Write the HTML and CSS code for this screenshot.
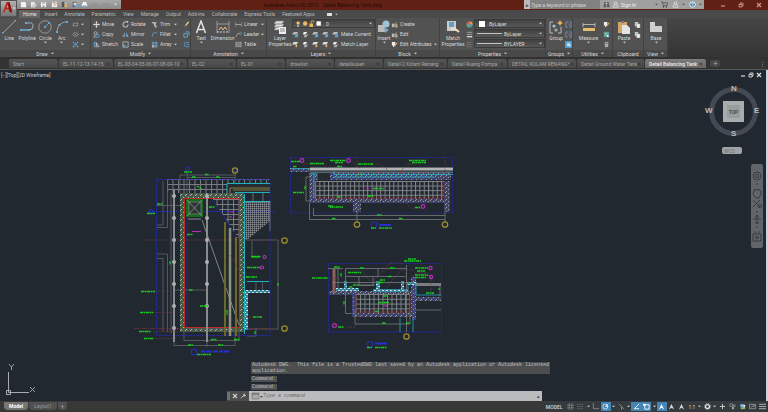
FILE: index.html
```html
<!DOCTYPE html>
<html lang="en">
<head>
<meta charset="utf-8">
<title>Autodesk AutoCAD 2019 - Detail Balancing Tank.dwg</title>
<link rel="stylesheet" href="styles.css">
</head>
<body>
<svg class="defs" aria-hidden="true">
  <symbol id="doc" viewBox="0 0 8 8"><path d="M1 1h5l1 2v4H1z" fill="#f2f2f2"/></symbol>
  <symbol id="open" viewBox="0 0 8 8"><path d="M1 1h4l1 2v4H1z" fill="#e8e8e8"/><path d="M1 7l2-3h5L6 7z" fill="#d0d0c8"/></symbol>
  <symbol id="save" viewBox="0 0 8 8"><path d="M1 1h6v6H1z" fill="#eee"/><path d="M2 1h4v2H2z" fill="#b5b5b5"/><path d="M3 5h2v2H3z" fill="#999"/></symbol>
  <symbol id="saveas" viewBox="0 0 8 8"><path d="M1 1h6v6H1z" fill="#eee"/><path d="M2 1h3v2H2z" fill="#aaa"/><path d="M3 6l4-4" stroke="#d9a94e" stroke-width="1.2"/></symbol>
  <symbol id="webopen" viewBox="0 0 8 8"><path d="M1 1h3v6H1z" fill="#555"/><path d="M4 4h3v3H4z" fill="#e0b35c"/><path d="M4 2h2v1H4z" fill="#eee"/></symbol>
  <symbol id="websave" viewBox="0 0 8 8"><path d="M2 1h4v6H2z" fill="#555"/><path d="M3 2h3v3H3z" fill="#eee"/><path d="M4 4h3v3H4z" fill="#62a9dc"/></symbol>
  <symbol id="print" viewBox="0 0 8 8"><path d="M2 1h4v2H2zM1 3h6v3H1z" fill="#f5f5f5"/><path d="M2 5h4v2H2z" fill="#6fb0d8"/></symbol>
  <symbol id="undo" viewBox="0 0 8 8"><path d="M7 5Q5 3 2 4M3 2L1 4l2 2" fill="none" stroke="#888"/></symbol>
  <symbol id="redo" viewBox="0 0 8 8"><path d="M1 5q2-2 5-1M5 2l2 2-2 2" fill="none" stroke="#888"/></symbol>
  <symbol id="caret" viewBox="0 0 4 4"><path d="M0 1h4L2 3z" fill="currentColor"/></symbol>
  <symbol id="line" viewBox="0 0 14 14"><path d="M1 13L13 1" stroke="#bbb" stroke-width=".7"/><path d="M0 12h1.500v1.500H0zM12.500 0H14v1.500h-1.500z" fill="#5fa9d6"/></symbol>
  <symbol id="poly" viewBox="0 0 14 14"><path d="M1 10h8q4 0 4-4T9 3H6" fill="none" stroke="#aaa"/><path d="M1 10h8" stroke="#5fa9d6"/><path d="M0 9h2v2H0zM8 9h2v2H8zM5 2h2v2H5z" fill="#5fa9d6"/></symbol>
  <symbol id="circle" viewBox="0 0 14 14"><circle cx="7" cy="7" r="6.200" fill="none" stroke="#aaa" stroke-width=".8"/><path d="M7 7l4-4" stroke="#5fa9d6"/><path d="M6 6h2v2H6zM10 2h2v2h-2z" fill="#5fa9d6"/></symbol>
  <symbol id="arc" viewBox="0 0 14 14"><path d="M2 12Q2 3 12 1.500" fill="none" stroke="#aaa" stroke-width=".8"/><path d="M1 11h2v2H1zM3.500 4h2v2h-2zM11 1h2v2h-2z" fill="#5fa9d6"/></symbol>
  <symbol id="rect" viewBox="0 0 8 8"><path d="M1.500 2.500h5v3h-5z" fill="none" stroke="#aaa" stroke-width=".7"/><path d="M1 5h1v1H1zM6 2h1v1H6z" fill="#6cb8e6"/></symbol>
  <symbol id="ellipse" viewBox="0 0 8 8"><ellipse cx="4" cy="4" rx="3" ry="2" fill="none" stroke="#aaa" stroke-width=".7"/><path d="M3.500 3.500h1v1h-1zM6.500 3.500h1v1h-1z" fill="#6cb8e6"/></symbol>
  <symbol id="hatch" viewBox="0 0 8 8"><path d="M1 1h1v1H1zM6 1h1v1H6zM1 6h1v1H1zM6 6h1v1H6z" fill="#ddd"/><path d="M2 2h4v4H2z" fill="#4d87ab"/></symbol>
  <symbol id="move" viewBox="0 0 8 8"><path d="M4 0l1.500 2h-1v1.500H6v-1L8 4 6 5.500v-1H4.500V6h1L4 8 2.500 6h1V4.500H2v1L0 4l2-1.500v1h1.500V2h-1z" fill="#ddd"/></symbol>
  <symbol id="copy" viewBox="0 0 8 8"><circle cx="3" cy="2.500" r="1.700" fill="none" stroke="#ccc" stroke-width=".8"/><circle cx="5" cy="5.500" r="1.900" fill="none" stroke="#62a9dc"/><path d="M1 5v2h2" fill="none" stroke="#ccc" stroke-width=".7"/></symbol>
  <symbol id="stretch" viewBox="0 0 8 8"><path d="M1.500 1.500h2v5h-2z" fill="none" stroke="#62a9dc"/><path d="M4 2l3 4.500H4z" fill="none" stroke="#ccc" stroke-width=".8"/></symbol>
  <symbol id="rotate" viewBox="0 0 8 8"><path d="M5 1.200A3 3 0 1 0 7 4" fill="none" stroke="#ddd"/><path d="M4.500 0H7v2.500z" fill="#ddd"/></symbol>
  <symbol id="mirror" viewBox="0 0 8 8"><path d="M3.300 1v5.500H.5z" fill="#999"/><path d="M4.700 1v5.500h2.800z" fill="#62a9dc"/></symbol>
  <symbol id="scale" viewBox="0 0 8 8"><path d="M1 1h6v6H1z" fill="none" stroke="#ccc" stroke-width=".8"/><path d="M1.500 4.500h2v2h-2z" fill="none" stroke="#62a9dc"/></symbol>
  <symbol id="trim" viewBox="0 0 8 8"><path d="M1 2h3M3 1l2 5M6 1L4 5" stroke="#ddd"/><circle cx="5.500" cy="6.300" r="1" fill="none" stroke="#ddd" stroke-width=".7"/></symbol>
  <symbol id="fillet" viewBox="0 0 8 8"><path d="M1.500 7V5q0-3 3-3H7" fill="none" stroke="#5c9cc8"/></symbol>
  <symbol id="array" viewBox="0 0 8 8"><path d="M1.500 1.500h2v2h-2zM5 1.500h2v2H5zM5 5h2v2H5z" fill="none" stroke="#62a9dc"/><path d="M1.500 5h2v2h-2z" fill="none" stroke="#ccc"/></symbol>
  <symbol id="erase" viewBox="0 0 8 8"><path d="M6.500 1L3 5" stroke="#f0d8a0" stroke-width="1.700"/><path d="M3.500 4L1 7l3-1.500z" fill="#e0813a"/></symbol>
  <symbol id="box" viewBox="0 0 8 8"><path d="M1 3h4v4H1zM3 1h4v4" fill="none" stroke="#62a9dc"/></symbol>
  <symbol id="offset" viewBox="0 0 8 8"><path d="M7 1.500H3Q1.500 1.500 1.500 4T3 6.500h4M7 4H4" fill="none" stroke="#5c9cc8"/></symbol>
  <symbol id="text" viewBox="0 0 14 14"><path d="M2.500 13L7 1l4.500 12M4 9.500h6" fill="none" stroke="#e2e2e2" stroke-width="1.500"/></symbol>
  <symbol id="dim" viewBox="0 0 14 14"><path d="M1 1v12M13 1v12M1 4h12" stroke="#aaa" fill="none" stroke-width=".8"/><path d="M3 10l2-3 2 3 2-3 2 3" stroke="#e7bd76" fill="none"/><path d="M1 12h12" stroke="#ccc" stroke-dasharray="2 1"/></symbol>
  <symbol id="linear" viewBox="0 0 8 8"><path d="M.5 1.500v5M7.500 1.500v5" stroke="#5fa9d6" stroke-width=".9"/><path d="M1 4h6" stroke="#ccc" stroke-width=".7"/></symbol>
  <symbol id="leader" viewBox="0 0 8 8"><path d="M1 7l2-4h2" fill="none" stroke="#bbb" stroke-width=".8"/><circle cx="6.300" cy="2.800" r="1.200" fill="none" stroke="#62a9dc" stroke-width=".8"/></symbol>
  <symbol id="table" viewBox="0 0 8 8"><path d="M.5 1h7v6h-7z" fill="#9a9a9a"/><path d="M.5 3h7M.5 5h7M3 1v6M5 1v6" stroke="#666" stroke-width=".5"/></symbol>
  <symbol id="layers" viewBox="0 0 14 14"><path d="M3 1h8l-2 3H1zM3 4h8l-2 3H1zM3 7h8l-2 3H1z" fill="#ddd" stroke="#777" stroke-width=".5"/><path d="M6 7h7v7H6z" fill="#eee"/><path d="M7 9h5M7 11h5" stroke="#888"/></symbol>
  <symbol id="layB" viewBox="0 0 8 8"><path d="M2 1h5L5 4H0z" fill="#bbb"/><path d="M4 3h3v4H3z" fill="#5f9fca"/></symbol>
  <symbol id="layW" viewBox="0 0 8 8"><path d="M2 1h4L4 4H1z" fill="#eee"/><path d="M3 4h4L5 7H2z" fill="#acacac"/></symbol>
  <symbol id="layY" viewBox="0 0 8 8"><path d="M2 1h5L5 4H0z" fill="#ddd"/><path d="M4 4h2v3H4z" fill="#e4b45c"/></symbol>
  <symbol id="insert" viewBox="0 0 14 14"><circle cx="9" cy="4" r="3.500" fill="#9cc2d9"/><path d="M1 5h7v7H1z" fill="#bbb"/><path d="M7 7l5 3-4 3z" fill="#7aa9c6"/></symbol>
  <symbol id="create" viewBox="0 0 8 8"><path d="M1 3h3v4H1z" fill="#bbb"/><path d="M4 4l3-3M5 4h2v3H5z" stroke="#e0b978" fill="#999" stroke-width=".7"/></symbol>
  <symbol id="tagi" viewBox="0 0 8 8"><path d="M1 1h4v3L3 7 1 4z" fill="#eee"/><path d="M4 6l3-4" stroke="#e3af5c" stroke-width="1.300"/></symbol>
  <symbol id="match" viewBox="0 0 14 14"><path d="M1 1h9v10H1z" fill="#ccc"/><path d="M3 2h5v5H3z" fill="#5fa0d0"/><path d="M5 10l3-2 5 4" stroke="#f1e3c0" stroke-width="2" fill="none"/></symbol>
  <symbol id="wheel" viewBox="0 0 8 8"><circle cx="4" cy="4" r="3.500" fill="#58b26a"/><path d="M4 4V.5A3.500 3.500 0 0 1 7.500 4z" fill="#f09a3c"/><path d="M4 4h3.500A3.500 3.500 0 0 1 4 7.500z" fill="#4a8ad8"/><path d="M4 4H.5A3.500 3.500 0 0 1 4 .5z" fill="#d84d6a"/></symbol>
  <symbol id="lines" viewBox="0 0 8 8"><path d="M1 1.500h6M1 4h6" stroke="#aaa"/><path d="M1 6.500h6" stroke="#ddd" stroke-width="1.500"/></symbol>
  <symbol id="dots" viewBox="0 0 8 8"><path d="M1 1.500h6M1 4h6M1 6.500h6" stroke="#999" stroke-dasharray="1 1"/></symbol>
  <symbol id="group" viewBox="0 0 14 14"><path d="M4 2H1v11h3M9 13h3V7" fill="none" stroke="#bbb"/><circle cx="5" cy="6" r="1.600" fill="#9ac6e2"/><circle cx="7" cy="10" r="1.600" fill="#aaa"/><path d="M11 0l1 2 2 1-2 1-1 2-1-2-2-1 2-1z" fill="#f0b75c"/></symbol>
  <symbol id="ungroup" viewBox="0 0 8 8"><path d="M3 1H1v6h2M5 1h2v6H5" fill="none" stroke="#5f9fca"/><path d="M3 2l3 4" stroke="#d35d4c"/></symbol>
  <symbol id="gsel" viewBox="0 0 8 8"><path d="M0 0h8v8H0z" fill="#4f9bcd"/><path d="M2 2h4v4H2z" fill="#a9d7f0"/><path d="M4 3l3 3H5z" fill="#fff"/></symbol>
  <symbol id="measure" viewBox="0 0 14 14"><path d="M1 3v4M13 3v4M1 4.500h12" stroke="#ccc" stroke-width=".8"/><path d="M1 8h12v3H1z" fill="#e6bd6f"/></symbol>
  <symbol id="calc" viewBox="0 0 8 8"><path d="M2 1h4v6H2z" fill="#aaa"/><path d="M3 2h2v1H3z" fill="#555"/></symbol>
  <symbol id="pick" viewBox="0 0 8 8"><path d="M1 1h6v6H1z" fill="#5b9fa7"/><path d="M2 2h3v3H2z" fill="#6cc08a"/><path d="M4 4l3 2-2 1z" fill="#fff"/></symbol>
  <symbol id="paste" viewBox="0 0 14 14"><path d="M1 2h9v11H1z" fill="#d3a668"/><path d="M4 1h3v2H4z" fill="#777"/><path d="M5 5h5l3 3v6H5z" fill="#e4e4e4"/></symbol>
  <symbol id="pages" viewBox="0 0 8 8"><path d="M1 1h3l1 1v4H1z" fill="#ccc"/><path d="M3 3h3l1 1v4H3z" fill="#eee" stroke="#777" stroke-width=".4"/></symbol>
  <symbol id="base" viewBox="0 0 14 14"><path d="M1 2h5v4h7v6H1z" fill="#cfcfcf"/></symbol>
  <symbol id="x" viewBox="0 0 6 6"><path d="M1 1l4 4M5 1L1 5" stroke="currentColor" stroke-width="1.200"/></symbol>
  <symbol id="min" viewBox="0 0 6 6"><path d="M1 4h4" stroke="currentColor" stroke-width="1.200"/></symbol>
  <symbol id="restore" viewBox="0 0 6 6"><path d="M2 2V1h3v3H4M1 2.500h3V5H1z" fill="none" stroke="currentColor" stroke-width=".9"/></symbol>
  <symbol id="wrench" viewBox="0 0 8 8"><path d="M1 7l3.500-3.500" stroke="#ccc" stroke-width="1.200"/><path d="M4 3l1-2 2-.5L6 2l1 1 1-1-.5 2L5 5z" fill="#ccc"/></symbol>
  <symbol id="person" viewBox="0 0 8 8"><circle cx="4" cy="2.300" r="1.500" fill="none" stroke="#e8e8e8" stroke-width=".8"/><path d="M1 7q0-3 3-3t3 3z" fill="none" stroke="#e8e8e8" stroke-width=".8"/></symbol>
  <symbol id="binoc" viewBox="0 0 8 8"><path d="M1.500 1h2v6h-3zM4.500 1h2l1 6h-3z" fill="#5c5c5c"/><path d="M2 3h4" stroke="#ddd" stroke-width=".6"/></symbol>
  <symbol id="cart" viewBox="0 0 8 8"><path d="M0 1h1.500l1 4H7l.7-3H2" fill="none" stroke="#555" stroke-width=".9"/><circle cx="3" cy="6.700" r=".7"/><circle cx="6" cy="6.700" r=".7"/></symbol>
  <symbol id="help" viewBox="0 0 8 8"><circle cx="4" cy="4" r="3.500" fill="#eef4f8"/><circle cx="4" cy="4" r="2.700" fill="#4f88b3"/><path d="M3 3q0-1 1-1t1 1-1 1v.8M4 5.500v.7" fill="none" stroke="#fff" stroke-width=".8"/></symbol>
  <symbol id="sgrid" viewBox="0 0 8 8"><path d="M0 2.500h8M0 5.500h8M2.500 0v8M5.500 0v8" stroke="#8d8d8d" stroke-width=".8"/></symbol>
  <symbol id="sdots" viewBox="0 0 8 8"><path d="M0 1.500h8M0 4h8M0 6.500h8" stroke="#858585" stroke-width=".9" stroke-dasharray="1 1"/></symbol>
  <symbol id="ortho" viewBox="0 0 8 8"><path d="M1.500 0v6.500H8" fill="none" stroke="#888"/></symbol>
  <symbol id="polar" viewBox="0 0 8 8"><circle cx="3.800" cy="4.200" r="2.800" fill="none" stroke="#fff" stroke-width=".8"/><path d="M4 4l3-3M4 4h3" stroke="#fff" stroke-width=".8"/></symbol>
  <symbol id="iso" viewBox="0 0 8 8"><path d="M1 1l6 6M4 4v4" stroke="#8a9a84" stroke-width=".9"/></symbol>
  <symbol id="track" viewBox="0 0 8 8"><path d="M7 1L1.500 6.500H7" fill="none" stroke="#fff"/></symbol>
  <symbol id="osnap" viewBox="0 0 8 8"><path d="M2 2h5v5H2z" fill="none" stroke="#fff"/><path d="M0 1h3v2H0z" fill="#fff"/></symbol>
  <symbol id="anno" viewBox="0 0 8 8"><path d="M1 7.500L4 1l3 6.500L4 5.500z" fill="currentColor"/></symbol>
  <symbol id="gear" viewBox="0 0 8 8"><circle cx="4" cy="4" r="2.200" fill="none" stroke="#ddd" stroke-width="1.500"/><circle cx="4" cy="4" r="3.300" fill="none" stroke="#ddd" stroke-width="1" stroke-dasharray="1.300 1.300"/></symbol>
  <symbol id="plus" viewBox="0 0 8 8"><path d="M4 1v6M1 4h6" stroke="currentColor"/></symbol>
  <symbol id="isolate" viewBox="0 0 8 8"><path d="M1 1h3v3H1zM5 2h2v2H5z" fill="none" stroke="#999" stroke-width=".8"/><circle cx="4.500" cy="6" r="1.300" fill="#aaa"/></symbol>
  <symbol id="hw" viewBox="0 0 8 8"><circle cx="3.500" cy="3" r="2.200" fill="#6db4df"/><path d="M2 5h5v2H2z" fill="#8bb86a"/><path d="M5 2h2v3H5z" fill="#e8e8e8"/></symbol>
  <symbol id="clean" viewBox="0 0 8 8"><path d="M.5 1.500h7v5h-7z" fill="none" stroke="#aaa" stroke-width=".8"/><path d="M2 5l4-2M4 2.500h2v2" stroke="#aaa" stroke-width=".7" fill="none"/></symbol>
  <symbol id="burger" viewBox="0 0 8 8"><path d="M0 1.500h8M0 4h8M0 6.500h8" stroke="#bbb"/></symbol>
</svg>

<div class="app">
  <header class="top">
    <button class="appbtn" aria-label="Application menu"><svg class="logo" viewBox="0 0 16 16"><path d="M2 12L6 1h3l3 11H9L8 9H5l-1 3z" fill="#b92a20"/><path d="M6 7h2L7 4z" fill="#d8a5a0"/><path d="M9 1l3 11h-2L7 3z" fill="#7e1812"/><path d="M12.500 7h3L14 9z" fill="#ddd"/></svg></button>
    <div class="topmain">
      <div class="titlebar">
        <div class="qat">
          <button aria-label="New"><svg><use href="#doc"/></svg></button><button aria-label="Open"><svg><use href="#open"/></svg></button><button aria-label="Save"><svg><use href="#save"/></svg></button><button aria-label="Save as"><svg><use href="#saveas"/></svg></button><button aria-label="Open from web"><svg><use href="#webopen"/></svg></button><button aria-label="Save to web"><svg><use href="#websave"/></svg></button><button aria-label="Plot"><svg><use href="#print"/></svg></button><button aria-label="Undo"><svg><use href="#undo"/></svg></button><button aria-label="Redo"><svg><use href="#redo"/></svg></button><button aria-label="Customize"><svg class="car"><use href="#caret"/></svg></button>
        </div>
        <div class="title"><span>Autodesk AutoCAD 2019</span><span>Detail Balancing Tank.dwg</span></div>
        <div class="info">
          <button class="go" aria-label="Expand search">▸</button>
          <input class="search" aria-label="Search" placeholder="Type a keyword or phrase">
          <button aria-label="Find"><svg><use href="#binoc"/></svg></button>
          <button class="sign"><svg><use href="#person"/></svg><span>Sign In</span><svg class="car"><use href="#caret"/></svg></button>
          <button aria-label="App store"><svg><use href="#cart"/></svg></button>
          <button class="wide" aria-label="Stay connected"><svg><use href="#person"/></svg><svg class="car"><use href="#caret"/></svg></button>
          <button class="wide" aria-label="Help"><svg><use href="#help"/></svg><svg class="car"><use href="#caret"/></svg></button>
        </div>
        <div class="winbtns"><button aria-label="Minimize"><svg><use href="#min"/></svg></button><button aria-label="Restore"><svg><use href="#restore"/></svg></button><button aria-label="Close"><svg><use href="#x"/></svg></button></div>
      </div>
      <nav class="menu">
        <a class="on" href="#">Home</a><a href="#">Insert</a><a href="#">Annotate</a><a href="#">Parametric</a><a href="#">View</a><a href="#">Manage</a><a href="#">Output</a><a href="#">Add-ins</a><a href="#">Collaborate</a><a href="#">Express Tools</a><a href="#">Featured Apps</a><a class="cam" href="#" aria-label="Minimize ribbon"><i></i><svg class="car"><use href="#caret"/></svg></a>
      </nav>
    </div>
  </header>

  <section class="ribbon">
    <div class="panel p-draw"><div class="body">
      <button class="big"><svg><use href="#line"/></svg>Line</button>
      <button class="big"><svg><use href="#poly"/></svg>Polyline</button>
      <button class="big"><svg><use href="#circle"/></svg>Circle<svg class="car"><use href="#caret"/></svg></button>
      <button class="big"><svg><use href="#arc"/></svg>Arc<svg class="car"><use href="#caret"/></svg></button>
      <div class="col"><button aria-label="Rectangle"><svg><use href="#rect"/></svg><svg class="car"><use href="#caret"/></svg></button><button aria-label="Ellipse"><svg><use href="#ellipse"/></svg><svg class="car"><use href="#caret"/></svg></button><button aria-label="Hatch"><svg><use href="#hatch"/></svg><svg class="car"><use href="#caret"/></svg></button></div>
    </div><h2>Draw<svg class="car"><use href="#caret"/></svg></h2></div>
    <div class="panel p-modify"><div class="body">
      <div class="col"><button><svg><use href="#move"/></svg>Move</button><button><svg><use href="#copy"/></svg>Copy</button><button><svg><use href="#stretch"/></svg>Stretch</button></div>
      <div class="col"><button><svg><use href="#rotate"/></svg>Rotate</button><button><svg><use href="#mirror"/></svg>Mirror</button><button><svg><use href="#scale"/></svg>Scale</button></div>
      <div class="col spread"><button><svg><use href="#trim"/></svg>Trim<svg class="car"><use href="#caret"/></svg></button><button><svg><use href="#fillet"/></svg>Fillet<svg class="car"><use href="#caret"/></svg></button><button><svg><use href="#array"/></svg>Array<svg class="car"><use href="#caret"/></svg></button></div>
      <div class="col"><button aria-label="Erase"><svg><use href="#erase"/></svg></button><button aria-label="Explode"><svg><use href="#box"/></svg></button><button aria-label="Offset"><svg><use href="#offset"/></svg></button></div>
    </div><h2>Modify<svg class="car"><use href="#caret"/></svg></h2></div>
    <div class="panel p-anno"><div class="body">
      <button class="big"><svg><use href="#text"/></svg>Text<svg class="car"><use href="#caret"/></svg></button>
      <button class="big"><svg><use href="#dim"/></svg>Dimension</button>
      <div class="col spread"><button><svg><use href="#linear"/></svg>Linear<svg class="car"><use href="#caret"/></svg></button><button><svg><use href="#leader"/></svg>Leader<svg class="car"><use href="#caret"/></svg></button><button><svg><use href="#table"/></svg>Table</button></div>
    </div><h2>Annotation<svg class="car"><use href="#caret"/></svg></h2></div>
    <div class="panel p-layers"><div class="body">
      <button class="big"><svg><use href="#layers"/></svg>Layer<br>Properties</button>
      <div class="col">
        <label class="combo lay"><svg class="bulbs" viewBox="0 0 32 8"><circle cx="3" cy="3.500" r="2" fill="#f0c060"/><path d="M2 6h2v2H2z" fill="#bbb"/><circle cx="11" cy="4" r="2.500" fill="#edb95c"/><path d="M16 4h4v4h-4z" fill="#e7b45a"/><path d="M18 4V1h3v2" fill="none" stroke="#d9a550"/><path d="M24 1.500h5v5h-5z" fill="#fff"/></svg><select aria-label="Layer"><option>0</option></select><svg class="car"><use href="#caret"/></svg></label>
        <div class="row"><button aria-label="Off"><svg><use href="#layB"/></svg></button><button aria-label="Isolate"><svg><use href="#layW"/></svg></button><button aria-label="Freeze"><svg><use href="#layB"/></svg></button><button aria-label="Lock"><svg><use href="#layB"/></svg></button><button><svg><use href="#layB"/></svg>Make Current</button></div>
        <div class="row"><button aria-label="On"><svg><use href="#layY"/></svg></button><button aria-label="Unisolate"><svg><use href="#layW"/></svg></button><button aria-label="Thaw"><svg><use href="#layY"/></svg></button><button aria-label="Unlock"><svg><use href="#layY"/></svg></button><button><svg><use href="#layW"/></svg>Match Layer</button></div>
      </div>
    </div><h2>Layers<svg class="car"><use href="#caret"/></svg></h2></div>
    <div class="panel p-block"><div class="body">
      <button class="big"><svg><use href="#insert"/></svg>Insert<svg class="car"><use href="#caret"/></svg></button>
      <div class="col spread"><button><svg><use href="#create"/></svg>Create</button><button><svg><use href="#create"/></svg>Edit</button><button><svg><use href="#tagi"/></svg>Edit Attributes<svg class="car"><use href="#caret"/></svg></button></div>
    </div><h2>Block<svg class="car"><use href="#caret"/></svg></h2></div>
    <div class="panel p-props"><div class="body">
      <button class="big"><svg><use href="#match"/></svg>Match<br>Properties</button>
      <div class="col"><button aria-label="Color"><svg><use href="#wheel"/></svg></button><button aria-label="Lineweight"><svg><use href="#lines"/></svg></button><button aria-label="Linetype"><svg><use href="#dots"/></svg></button></div>
      <div class="col grow">
        <label class="combo"><i class="sw"></i><select aria-label="Object color"><option>ByLayer</option></select><svg class="car"><use href="#caret"/></svg></label>
        <label class="combo"><i class="ln"></i><select aria-label="Object lineweight"><option>ByLayer</option></select><svg class="car"><use href="#caret"/></svg></label>
        <label class="combo"><i class="ln"></i><select aria-label="Object linetype"><option>BYLAYER</option></select><svg class="car"><use href="#caret"/></svg></label>
      </div>
    </div><h2>Properties<svg class="car"><use href="#caret"/></svg></h2></div>
    <div class="panel p-group"><div class="body">
      <button class="big"><svg><use href="#group"/></svg>Group</button>
      <div class="col"><button aria-label="Ungroup"><svg><use href="#ungroup"/></svg></button><button aria-label="Group edit"><svg><use href="#ungroup"/></svg></button><button aria-label="Group selection"><svg><use href="#gsel"/></svg></button></div>
    </div><h2>Groups<svg class="car"><use href="#caret"/></svg></h2></div>
    <div class="panel p-util"><div class="body">
      <button class="big"><svg><use href="#measure"/></svg>Measure<svg class="car"><use href="#caret"/></svg></button>
      <div class="col"><button aria-label="Quick select"><svg><use href="#tagi"/></svg></button><button aria-label="Select all"><svg><use href="#pick"/></svg></button><button aria-label="Calculator"><svg><use href="#calc"/></svg></button></div>
    </div><h2>Utilities<svg class="car"><use href="#caret"/></svg></h2></div>
    <div class="panel p-clip"><div class="body">
      <button class="big"><svg><use href="#paste"/></svg>Paste<svg class="car"><use href="#caret"/></svg></button>
      <div class="col"><button aria-label="Cut"><svg><use href="#pages"/></svg></button><button aria-label="Copy clip"><svg><use href="#pages"/></svg></button></div>
    </div><h2>Clipboard</h2></div>
    <div class="panel p-view"><div class="body">
      <button class="big"><svg><use href="#base"/></svg>Base<svg class="car"><use href="#caret"/></svg></button>
    </div><h2>View<svg class="car"><use href="#caret"/></svg></h2></div>
  </section>

  <nav class="files">
    <a href="#">Start</a><a href="#">EL-11-12-13-14-15<svg><use href="#x"/></svg></a><a href="#">EL-03-04-05-06-07-08-09-10<svg><use href="#x"/></svg></a><a href="#">EL-02<svg><use href="#x"/></svg></a><a href="#">EL-01<svg><use href="#x"/></svg></a><a href="#">drawlist<svg><use href="#x"/></svg></a><a href="#">detailkusen<svg><use href="#x"/></svg></a><a href="#">Detail-2 Kolam Renang<svg><use href="#x"/></svg></a><a href="#">Detail Ruang Pompa<svg><use href="#x"/></svg></a><a href="#">DETAIL KOLAM RENANG*<svg><use href="#x"/></svg></a><a href="#">Detail Ground Water Tank<svg><use href="#x"/></svg></a><a class="on" href="#">Detail Balancing Tank<svg><use href="#x"/></svg></a><button class="add" aria-label="New drawing"><svg><use href="#plus"/></svg></button><button class="more" aria-label="More drawings">⋮</button>
  </nav>

  <main class="canvas">
    <svg class="drawing" viewBox="0 70 768 331" preserveAspectRatio="xMinYMin meet" role="img" aria-label="Balancing tank drawing">
      <defs>
        <pattern id="g6" width="5.500" height="5" x="167" y="179" patternUnits="userSpaceOnUse"><path d="M0 .5H6M.5 0V5" stroke="#797d80" stroke-width="1" fill="none"/></pattern>
        <pattern id="g4" width="4.350" height="4.600" x="315" y="181" patternUnits="userSpaceOnUse"><path d="M0 .5H5M.5 0V5" stroke="#84878a" stroke-width="1" fill="none"/></pattern>
        <pattern id="g3" width="4.500" height="4.800" x="355.500" y="294" patternUnits="userSpaceOnUse"><path d="M0 .5H5M.5 0V5" stroke="#808386" stroke-width="1" fill="none"/></pattern>
        <pattern id="g2" width="2" height="2" patternUnits="userSpaceOnUse"><path d="M0 0H2M0 0V2" stroke="#a2a5a8" stroke-width="1" fill="none"/></pattern>
        <pattern id="wall" width="5" height="5" patternUnits="userSpaceOnUse"><path d="M0 0h5v5H0z" fill="#4c5450"/><path d="M0 0h1v1H0zM3 2h1v1H3zM1 4h1v1H1z" fill="#b4b4b4"/><path d="M2 1h1v1H2zM4 4h1v1H4zM0 2h1v1H0z" fill="#2a8230"/></pattern>
        <pattern id="conc" width="5" height="4" patternUnits="userSpaceOnUse"><path d="M0 0h5v4H0z" fill="#404660"/><path d="M0 0h1v1H0zM3 1h1v1H3zM1 3h1v1H1z" fill="#9a9a9a"/><path d="M2 2h1v1H2zM4 3h1v1H4z" fill="#3a3ab0"/></pattern>
        <pattern id="ice" width="4" height="4" patternUnits="userSpaceOnUse"><path d="M0 0h4v4H0z" fill="#32869c"/><path d="M0 0h2v1H0zM2 2h2v1H2z" fill="#ccdce2"/></pattern>
      </defs>

      <!-- plan -->
      <g fill="none">
        <path d="M167 179h103v14H167z" fill="url(#g6)"/>
        <g stroke="#62666b" stroke-width=".8"><path d="M163 181v44h-6M167.500 179v48.500H157M157 254h10.500v78M157 258.500h6V331M171 193v140M157 205.500h23"/><path d="M180 193v-18h55M187 193v-15.500h48M235 173v20M187 170v7M247 241l2-1h28.500M278 240v88.500M174 290h33M252 241v16"/><path d="M174 345.500h61M184 340.500h55M174 332v14M184 332v9M239 332v9M235 332v14M207 330v17M245 329h34M247 336h9v-8M256 281v10M262.500 281v10"/></g>
        <g stroke="#242abc" stroke-width=".8" stroke-dasharray="3 1"><path d="M156.500 179.500H270v156H156.500zM148 211.500h128M187 198v138M212 200l26 38"/></g>
        <path d="M145 240h135M134 328.500h140" stroke="#6a353d" stroke-width=".7" stroke-dasharray="5 1 1 1"/>
        <path d="M180 193h64v139h-64z M185 198v130h54V198z" fill="url(#wall)" fill-rule="evenodd"/>
        <path d="M212 198h27v41z" fill="url(#g6)"/>
        <path d="M184.500 198.500h55v129h-55z" stroke="#bf2a27" stroke-width="1.200"/>
        <path d="M186 199h17v18h-17z" fill="#17691e"/><path d="M189 202h12v12h-12z" fill="#2b3433" stroke="#8c9490" stroke-width=".6"/><path d="M187 200l15 16M202 200l-15 16" stroke="#a7aaa7" stroke-width=".7"/><path d="M188 219h13" stroke="#888"/>
        <path d="M202 220l37 105" stroke="#858585"/>
        <path d="M225 222v114M236 237v99" stroke="#6d6927" stroke-width="2"/><path d="M230 228v108" stroke="#929482" stroke-width="2.500"/>
        <path d="M174 190v152M207 193v149" stroke="#898b8d" stroke-width="2"/>
        <g fill="#aeb0b2"><circle cx="174" cy="196" r="2"/><circle cx="174" cy="218" r="2"/><circle cx="174" cy="240" r="2"/><circle cx="174" cy="262" r="2"/><circle cx="174" cy="284" r="2"/><circle cx="174" cy="306" r="2"/><circle cx="174" cy="328" r="2"/><circle cx="207" cy="196" r="2"/><circle cx="207" cy="218" r="2"/><circle cx="207" cy="240" r="2"/><circle cx="207" cy="262" r="2"/><circle cx="207" cy="284" r="2"/><circle cx="207" cy="306" r="2"/></g>
        <path d="M227 183h43v10h-43z" fill="#252d33"/>
        <path d="M230 193v-5h40M233 190h37" stroke="#8b7a3c"/>
        <path d="M227 193v-9.500h43M235 192.500h35M244.500 201.500H270M244.500 194v140M247 281.500h22" stroke="#20b2c0"/>
        <path d="M253 193v8M263 193v8M270 201v30" stroke="#888" stroke-width=".7"/>
        <path d="M245 202h25v19l-23 19h-2z" fill="url(#g2)"/>
        <path d="M245 290h25v3h-22v37h-3z" fill="url(#ice)"/>
        <g stroke="#9b8c2f" stroke-width="1.300"><circle cx="235" cy="170.500" r="2.600" fill="#273072"/><circle cx="284.500" cy="240.500" r="2.700"/><circle cx="284.500" cy="328.500" r="2.700"/></g>
        <g stroke="#2530cf"><circle cx="187.500" cy="169" r="2"/><circle cx="151" cy="211.500" r="2"/><circle cx="194" cy="352" r="3"/><path d="M201 351.500h28" stroke-width="2" stroke-dasharray="4 1 6 1 5 1"/></g>
        <g stroke="#643640" stroke-width=".7" stroke-dasharray="2 1"><path d="M155 291h15M153 312.500h20M153 331.500h25M153 338.500h20M230 255l14 24M240 317h13"/></g>
        <g stroke="#18c91e" stroke-width="1.300" stroke-dasharray="3 .5 2 .5"><path d="M205 174.500h4M192 177h4M216 177h4M157 204h6M197 186l5 3M141 291.500h14M140 312.500h13M139 331.500h12M144 338.500h9M251 256.500h10M247 267.500h13M246 277h11M253 317h9M252 257h7M187 234.500h6M188 345h5M218 345h5M211 339.500h6M234 339.500h6M189 290h4M200 306h8M170 261v4M227 310v5M197 354.500h14M278 283v3M255 331v3M184 172h8M209 207h6M147 213.500h8"/></g>
        <g stroke="#b82fb8" stroke-width="1.200"><path d="M192 231.500h9M230 212h4M229 217h3"/><circle cx="264.500" cy="257" r="1.500"/><circle cx="262" cy="267.500" r="1.500"/></g>
      </g>

      <!-- long section -->
      <g fill="none">
        <path d="M290.500 157.500h162v55.500h-162z" stroke="#242aa8" stroke-width=".8" stroke-dasharray="3 1"/>
        <path d="M315 181h129v18.500H315z" fill="url(#g4)"/>
        <path d="M290 168h20v4h-20zM309 173h142v7H315v19h129v-18h6v31h-6v-9h-83v9h-8v-9h-44z" fill="url(#conc)"/>
        <path d="M318 173h12v8h-12z" fill="#242c32"/>
        <path d="M310 167.500h143v3H310z" fill="#a4a6a8"/><path d="M310 169h143" stroke="#d0d0d0" stroke-width=".7"/>
        <path d="M310 171.500h143v1.500H310z" fill="#596a74"/>
        <path d="M334 174.500h119M334 171v4M309 174h8M291 168.500h19M334 177h100M314 174v24" stroke="#2b9cb8" stroke-width="1"/>
        <path d="M315 181v17h128v-17" stroke="#9c393b" stroke-width=".8"/>
        <path d="M355 172.500h3M399 172.500h3M423 172.500h3M378 172.500h2" stroke="#cf3434"/>
        <g stroke="#777b7e" stroke-width=".8"><path d="M313 215.500h132M309.500 219.500H445M309.500 203v17M313.500 208v8M357 212v10M445 212v10M306 177v24M306 177h4M306 201h4"/></g>
        <g stroke="#643640" stroke-width=".7" stroke-dasharray="2 1"><path d="M303 164h20l5 4M345 162h7l8 6M372 164h8l8 6M400 172l7-8h10M407 203l3 5h12M445 157v55M357 157v10"/></g>
        <g stroke="#9b8c2f" stroke-width="1.300"><circle cx="357" cy="224.500" r="2.700"/><circle cx="445" cy="224.500" r="2.700"/></g>
        <g stroke="#2530cf"><circle cx="374" cy="225" r="3"/><path d="M379 225h12" stroke-width="2"/></g>
        <g stroke="#18c91e" stroke-width="1.300" stroke-dasharray="3 .5 2 .5"><path d="M291 161.500h10M293 166.500h4M310 163.500h14M330 160.500h16M335 162.500h8M337 166.500h5M358 164h15M409 160.500h17M412 162.500h14M293 192.500h11M373 188.500h11M337 197h4M368 196h6M328 206h5M330 207h13M377 215h5M332 218.500h4M399 218.500h4M415 207.500h5M305 186v4M360 174h2M371 228h5M379 228h13"/></g>
        <g stroke="#b82fb8" stroke-width="1.200"><circle cx="302" cy="160.500" r="1.800"/><circle cx="348.500" cy="160.500" r="1.800"/><circle cx="423" cy="206.500" r="1.800"/><path d="M366 188.500h3"/></g>
      </g>

      <!-- cross section -->
      <g fill="none">
        <path d="M328.500 263.500h113v68.500h-113z" stroke="#242aa8" stroke-width=".8" stroke-dasharray="3 1"/>
        <path d="M355.500 294H410v19h-54.500z" fill="url(#g3)"/>
        <path d="M329 291h30v3h-4v19h56v-36h5v20h25v4h-25v19h-4v-3h-60v-22h-23zM359 291h52v3h-52z" fill="url(#conc)"/>
        <path d="M334 269v24" stroke="#8e6060" stroke-width="3"/>
        <path d="M336 288h23v3h-23zM373 289h35v3h-35zM344 281h3v8h-3zM376 281h4v8h-4zM401 281h3v8h-3zM407 282h10v3h-10z" fill="url(#ice)"/>
        <path d="M415 283h26v3h-26z" fill="#7b7d7f"/>
        <path d="M416 285v10h25M400 318v14M413 318v14M408 284v8" stroke="#258f9f"/>
        <path d="M356 294v18h54v-18" stroke="#9c393b" stroke-width=".8"/>
        <g stroke="#777b7e" stroke-width=".8"><path d="M328 268.500h15M345.500 268.500v45h6M345.500 268.500h61M378 268.500v8M406.500 265v67M345.500 276.500h60M359 276.500v9h14v-9M338 268v20M332 282.500h80M355 310v14h55v-12M416 310h25M440 285v11M357 285h18"/></g>
        <g stroke="#703942" stroke-width=".7" stroke-dasharray="2 1"><path d="M329 278.500h10M360 273h4l6 8M374 281l16-18h12M387 287l14-17h14M402 286l14-13h12M425 276h6v18M347 327h8l6-12"/></g>
        <g stroke="#9b8c2f" stroke-width="1.300"><circle cx="406.500" cy="336.500" r="2.700"/></g>
        <g stroke="#2530cf"><circle cx="370" cy="344.500" r="3"/><path d="M375 343.500h12" stroke-width="2"/></g>
        <g stroke="#18c91e" stroke-width="1.300" stroke-dasharray="3 .5 2 .5"><path d="M312 278h16M348 272.500h13M360 268h4M390 268h5M380 280h5M378 282.500h5M388 276.500h4M404 261h17M408 259h8M415 268h13M417 271h8M415 275h13M415 277.500h11M378 302.500h11M375 311.500h4M383 296h4M334 267h6M341 273v4M344 301v4M426 293h8M338 327h6M382 323h4M406 323h4M367 347.500h5M375 347.500h12M439 288v2M353 285h6M349 287h4"/></g>
        <g stroke="#b82fb8" stroke-width="1.200"><circle cx="334.500" cy="325.500" r="1.900"/><circle cx="430.500" cy="268" r="1.600"/><circle cx="431" cy="277" r="1.600"/><path d="M384 306h3"/></g>
      </g>
    </svg>

    <div class="vlabel">[−][Top][2D Wireframe]</div>
    <div class="vwin"><button aria-label="Minimize drawing"><svg><use href="#min"/></svg></button><button aria-label="Restore drawing"><svg><use href="#restore"/></svg></button><button aria-label="Close drawing"><svg><use href="#x"/></svg></button></div>
    <div class="cube"><div class="ring"></div><button class="face">TOP</button><b class="n">N</b><b class="e">E</b><b class="s">S</b><b class="w">W</b></div>
    <button class="wcs">WCS</button>
    <div class="navbar">
      <svg viewBox="0 0 12 84"><g fill="none" stroke="#34383d" stroke-width=".9"><circle cx="6" cy="12" r="4"/><circle cx="6" cy="12" r="1.700"/><path d="M5 20h2M3 32q-2-4 0-4v-2q1-1 2 0 1-2 2 0 2-1 2 1 2 0 1 3l-2 4H5zM2 36l7 7M9 36l-7 7"/><circle cx="9" cy="42" r="1.700"/><path d="M5 48h2M6 51v8M2 55h8M4 53l2-2 2 2M4 58l2 2 2-2M5 63h2M2 70h8v7H2zM3 68h2M7 68h2M5 72l3 1.500L5 75z"/></g></svg>
    </div>
    <svg class="ucs" viewBox="0 0 34 38"><g fill="none" stroke="#a9abad"><path d="M3.500 9v20.500H24"/><path d="M1.500 27.500h4v4h-4z"/><path d="M4 1l2.500 3L9 1M6.500 4v3M25 24l5 5M30 24l-5 5" stroke-width=".9"/></g></svg>
    <div class="edge"></div>

    <div class="cmd">
      <div class="hist"><p>Autodesk DWG.&nbsp; This file is a TrustedDWG last saved by an Autodesk application or Autodesk licensed<br>application.</p><p>Command:</p><p>Command:</p></div>
      <div class="cmdbar"><div class="grip"><i></i><button aria-label="Close command line"><svg><use href="#x"/></svg></button><button aria-label="Customize command line"><svg><use href="#wrench"/></svg></button></div>
        <label class="entry"><svg viewBox="0 0 12 8"><path d="M1 1h7v6H1z" fill="#aaa" stroke="#777" stroke-width=".7"/><path d="M1 2h7" stroke="#666"/><path d="M9 4h3l-1.500 2z" fill="#555"/></svg><input aria-label="Command" placeholder="Type a command"><span>▴</span></label></div>
    </div>
  </main>

  <footer class="status">
    <nav class="layouts"><a class="on" href="#">Model</a><a href="#">Layout1</a><a class="plus" href="#" aria-label="New layout"><svg><use href="#plus"/></svg></a></nav>
    <div class="tools">
      <button class="model">MODEL</button><button aria-label="Grid"><svg><use href="#sgrid"/></svg></button><button aria-label="Snap"><svg><use href="#sdots"/></svg></button><button class="c" aria-label="Snap options"><svg class="car"><use href="#caret"/></svg></button><button aria-label="Ortho"><svg><use href="#ortho"/></svg></button><button class="hot" aria-label="Polar"><svg><use href="#polar"/></svg></button><button class="c" aria-label="Polar options"><svg class="car"><use href="#caret"/></svg></button><button aria-label="Isodraft"><svg><use href="#iso"/></svg></button><button class="c" aria-label="Isodraft options"><svg class="car"><use href="#caret"/></svg></button><button class="hot" aria-label="Tracking"><svg><use href="#track"/></svg></button><button class="hot" aria-label="Object snap"><svg><use href="#osnap"/></svg></button><button class="c" aria-label="Snap list"><svg class="car"><use href="#caret"/></svg></button><button class="hot" aria-label="Annotation visibility"><svg><use href="#anno"/></svg></button><button aria-label="Autoscale"><svg><use href="#anno"/></svg></button><button aria-label="Annotation scale"><svg><use href="#anno"/></svg></button><button>1:1</button><button class="c" aria-label="Scale list"><svg class="car"><use href="#caret"/></svg></button><button aria-label="Workspace"><svg><use href="#gear"/></svg></button><button class="c" aria-label="Workspace list"><svg class="car"><use href="#caret"/></svg></button><button aria-label="Monitor"><svg><use href="#plus"/></svg></button><button aria-label="Isolate objects"><svg><use href="#isolate"/></svg></button><button aria-label="Graphics"><svg><use href="#hw"/></svg></button><button aria-label="Clean screen"><svg><use href="#clean"/></svg></button><button aria-label="Customization"><svg><use href="#burger"/></svg></button>
    </div>
  </footer>
</div>
</body>
</html>
```

FILE: styles.css
```css
* { box-sizing: border-box; }
body { margin: 0; background: #212830; color: #c4c4c4; font: 5px/6px Roboto, "Noto Sans", sans-serif; }
.defs { position: absolute; width: 0; height: 0; }
button, input, select { margin: 0; padding: 0; border: 0; background: none; color: inherit; font: inherit; border-radius: 0; }
button { display: flex; align-items: center; justify-content: center; }
a { color: inherit; text-decoration: none; }
svg { display: block; flex: none; width: 7px; height: 7px; }
svg.car { width: 3px; height: 3px; }
.app { display: flex; flex-direction: column; height: 100vh; overflow: hidden; }

/* title bar and menu */
.top { display: flex; background: #4a4a4a; }
.appbtn { width: 17px; height: 17px; background: linear-gradient(#b5b0b0, #777); border: 1px solid #555; }
.logo { width: 15px; height: 15px; }
.topmain { flex: 1; min-width: 0; }
.titlebar { display: flex; height: 10px; background: #602114; }
.qat { display: flex; align-items: center; width: 104px; height: 9px; padding-left: 1px; background: linear-gradient(#a8a8a8, #8b8b8b); color: #eee; }
.qat button { flex: 1; }
.title { flex: 1; display: flex; justify-content: center; align-items: center; gap: 5px; color: #260a06; white-space: nowrap; }
.info { display: flex; align-items: center; width: 180px; height: 9px; background: #a0a0a0; color: #f2f2f2; }
.info button { width: 12px; }
.info .go { width: 6px; height: 9px; background: #bbb; color: #333; }
.info .search { flex: 1; min-width: 0; height: 9px; padding-left: 1px; background: #818181; font-style: italic; }
.search::placeholder { color: #d8d8d8; opacity: 1; }
.info .sign { width: 46px; gap: 2px; justify-content: flex-start; }
.sign .car { margin-left: auto; }
.info .wide { width: 17px; gap: 3px; }
.info .wide .car, .sign .car { color: #555; }
.winbtns { display: flex; align-items: center; width: 64px; padding-left: 10px; color: #c9968d; }
.winbtns button { flex: 1; }
.winbtns svg, .vwin svg { width: 6px; height: 6px; }
.menu { display: flex; height: 8px; align-items: center; white-space: nowrap; color: #bcbcbc; }
.menu a { height: 8px; padding: 0 3px; line-height: 8px; }
.menu a + a { margin-left: 1px; }
.menu .on { margin-left: 2px; padding: 0 4px; background: #646464; color: #e5e5e5; }
.menu .cam { display: flex; align-items: center; gap: 3px; margin-left: 7px; }
.cam i { width: 5px; height: 3px; background: #ddd; }

/* ribbon */
.ribbon { display: flex; height: 40px; background: linear-gradient(#464646, #353535); border-bottom: 1px solid #2f2f2f; color: #d8d8d8; }
.panel { display: flex; flex-direction: column; background: #525252; border-right: 1px solid #414141; white-space: nowrap; }
.body { display: flex; flex: 1; padding: 1px 0 1px 1px; }
.panel h2 { display: flex; align-items: center; justify-content: center; gap: 3px; flex: none; height: 7px; margin: 0; background: #494949; font: inherit; }
.big { flex-direction: column; justify-content: flex-start; flex: 1 1 0; padding-top: 1px; line-height: 6px; }
.big > svg { width: 14px; height: 14px; margin-bottom: 1px; }
.big > svg.car { width: 3px; height: 3px; margin: 0; }
.col { display: flex; flex-direction: column; flex: none; }
.col > *, .row { height: 10px; flex: 0 1 10px; }
.col button { justify-content: flex-start; gap: 2px; }
.spread .car { margin-left: auto; }
.row { display: flex; gap: 3px; }
.p-draw { width: 91px; }
.p-draw .col { width: 18px; margin-left: 2px; }
.p-draw .big:nth-child(2) { flex-grow: 1.2; }
.p-modify { width: 100px; }
.p-modify .body { padding-left: 2px; gap: 3px; }
.p-modify .col { width: 26px; }
.p-modify .col:nth-child(4) { width: 7px; margin-left: 3px; }
.p-anno { width: 76px; }
.p-anno .big { flex-grow: 3; }
.p-anno .big:nth-child(2) { flex-grow: 4; }
.p-anno .col { width: 29px; margin-right: 2px; }
.p-layers { width: 109px; }
.p-layers .col { width: 83px; }
.p-block { width: 64px; }
.p-block .col { width: 46px; margin-right: 2px; }
.p-props { width: 106px; }
.p-props .big { flex: 0 0 24px; }
.p-props .col { margin-left: 1px; }
.p-props .grow { flex: 1; }
.p-group { width: 27px; }
.p-util { width: 40px; }
.p-util .col, .p-clip .col { margin-right: 2px; }
.p-clip { width: 31px; }
.p-view { width: 24px; }
.col > .combo { display: flex; align-items: center; flex: 0 0 9px; height: 9px; padding: 0 2px; margin-bottom: 1px; background: linear-gradient(#414141, #585858); border: 1px solid #3a3a3a; }
.p-props .combo:last-child { margin-bottom: 0; }
.combo select { flex: 1; min-width: 0; appearance: none; height: 6px; line-height: 6px; padding-left: 2px; }
.bulbs { width: 29px; height: 7px; }
.sw { width: 6px; height: 6px; margin: 0 2px; background: #fff; }
.ln { width: 25px; height: 1px; background: #c4c4c4; }

/* drawing tabs */
.files { display: grid; grid-template-columns: 50px 55px 74px 49px 49px 49px 49px 64px 60px 69px 68px 62px 16px 1fr; height: 12px; padding: 1px 0 1px 9px; background: #333; border-bottom: 1px solid #555; color: #a8a8a8; white-space: nowrap; }
.files a { display: flex; align-items: center; justify-content: space-between; padding: 0 3px 0 4px; background: linear-gradient(#555, #464646); border-right: 1px solid #333; border-radius: 2px 3px 0 0; }
.files a svg { width: 4px; height: 4px; color: #353535; }
.files .on { background: linear-gradient(#7c7c7c, #666); color: #f0f0f0; font-weight: 500; }
.add { margin: 1px 3px; background: #484848; border-radius: 3px; }
.add svg { width: 5px; height: 5px; }
.more { justify-self: end; width: 12px; }

/* drawing area */
.canvas { position: relative; flex: 1; min-height: 0; background: #212830; overflow: hidden; }
.drawing { width: 100%; height: 100%; }
.vlabel { position: absolute; left: 1px; top: 2px; color: #ccc; }
.vwin { position: absolute; right: 6px; top: 2px; display: flex; gap: 2px; color: #ddd; }
.cube { position: absolute; right: 11px; top: 15px; width: 50px; height: 54px; }
.ring { position: absolute; left: 2px; top: 2px; width: 49px; height: 49px; border: 5px solid #444a53; border-radius: 50%; }
.face { position: absolute; left: 16px; top: 16px; width: 21px; height: 21px; background: #9a9d9d; border: 4px solid #a9acac; color: #4d5050; font-weight: 700; }
.cube b { position: absolute; font: 700 8px/8px "Liberation Sans", sans-serif; color: #b9babb; }
.cube .n { left: 24px; top: 0; }
.cube .e { left: 47px; top: 22px; }
.cube .s { left: 24px; top: 45px; }
.cube .w { left: -2px; top: 22px; }
.wcs { position: absolute; right: 26px; top: 77px; width: 20px; height: 7px; justify-content: flex-start; padding-left: 2px; background: #a0a3a6; border-radius: 2px; color: #6a6d70; }
.navbar { position: absolute; right: 5px; top: 94px; width: 12px; height: 84px; background: #60646b; border-radius: 2px; }
.navbar svg { width: 12px; height: 84px; }
.ucs { position: absolute; left: 5px; bottom: 0; width: 34px; height: 38px; }
.edge { position: absolute; right: 0; top: 0; bottom: 0; width: 2px; background: #c5d2df; }

/* command line */
.cmd { position: absolute; left: 227px; right: 226px; bottom: 0; }
.hist { display: flex; flex-direction: column; align-items: flex-start; gap: 2px; padding: 0 0 1px 24px; font-family: "Liberation Mono", monospace; white-space: nowrap; color: #c0c0c0; }
.hist p { margin: 0; padding: 0 1px; background: #4c4e50; }
.cmdbar { display: flex; height: 10px; }
.grip { display: flex; align-items: center; gap: 2px; width: 22px; background: #4c4c4c; color: #ccc; }
.grip i { width: 3px; height: 8px; background: #707070; }
.grip svg { width: 6px; height: 6px; }
.entry { display: flex; flex: 1; align-items: center; padding: 0 2px; background: #babbbc; color: #444; }
.entry svg { width: 12px; height: 8px; }
.entry input { flex: 1; min-width: 0; font: italic 5px/8px "Liberation Mono", monospace; }
.entry input::placeholder { color: #6a6a6a; opacity: 1; }

/* status bar */
.status { display: flex; justify-content: space-between; height: 11px; padding-left: 4px; background: #383838; }
.layouts { display: flex; height: 8px; margin-top: 1px; color: #999; }
.layouts a { display: flex; align-items: center; padding: 0 5px; background: #505050; border-radius: 0 0 4px 4px; margin-right: 1px; }
.layouts .on { background: #757575; color: #fff; font-weight: 700; }
.layouts svg { width: 5px; height: 5px; }
.layouts .plus { padding: 0 2px; }
.tools { display: flex; align-items: center; width: 227px; padding-left: 2px; background: #343a3e; color: #d8d8d8; }
.tools button { flex: 10 1 0; height: 9px; }
.tools .c { flex-grow: 5; }
.tools .model { flex-grow: 22; font-weight: 500; }
.tools .hot { background: #4385b5; color: #fff; }
```
